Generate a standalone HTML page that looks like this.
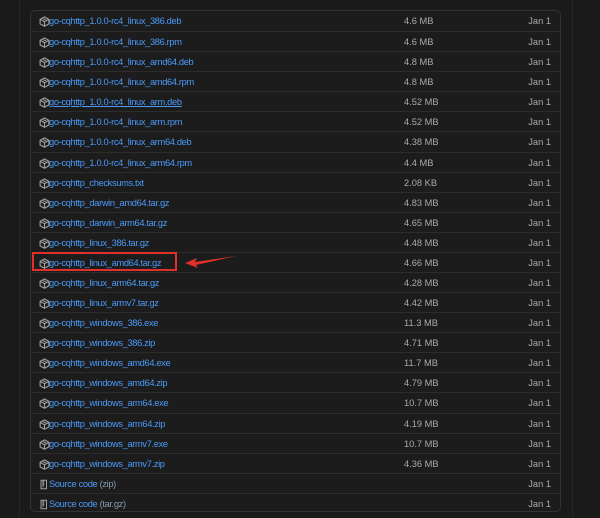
<!DOCTYPE html><html><head><style>
body{margin:0;width:600px;height:518px;background:#1a1a1a;overflow:hidden;font-family:"Liberation Sans",sans-serif;position:relative}
.vl{position:absolute;top:0;bottom:0;width:1px;background:#262626}
.box{position:absolute;left:30px;top:10px;width:531px;height:502px;border:1px solid #333;border-radius:5px;background:#1c1c1c;box-sizing:border-box}
.r{height:20.08px;border-top:1px solid #2c2c2c;box-sizing:border-box;position:relative;font-size:9.3px;line-height:21px}
.r:first-child{border-top:none}
.n{position:absolute;left:18px;color:#4b9af8;letter-spacing:-0.35px}
.n.u{text-decoration:underline}
.n span{color:#8a9bb0}
.ic{position:absolute;left:8px;top:5px}
.s{position:absolute;left:373px;color:#aaa}
.d{position:absolute;right:9px;color:#aaa}
.hl{position:absolute;left:32px;top:252px;width:145px;height:19px;border:2px solid #e0302c;box-sizing:border-box}
</style></head><body>
<div class="vl" style="left:19px"></div><div class="vl" style="left:572px"></div>
<div class="box" id="b"></div>
<div class="hl"></div>
<svg style="position:absolute;left:183px;top:255px" width="55" height="14"><path d="M2 8 L14 3 L12 7 L53 1 L13 10 L15 13 Z" fill="#e0302c"/></svg>
<script>
const rows=[["go-cqhttp_1.0.0-rc4_linux_386.deb","4.6 MB"],["go-cqhttp_1.0.0-rc4_linux_386.rpm","4.6 MB"],["go-cqhttp_1.0.0-rc4_linux_amd64.deb","4.8 MB"],["go-cqhttp_1.0.0-rc4_linux_amd64.rpm","4.8 MB"],["go-cqhttp_1.0.0-rc4_linux_arm.deb","4.52 MB",1],["go-cqhttp_1.0.0-rc4_linux_arm.rpm","4.52 MB"],["go-cqhttp_1.0.0-rc4_linux_arm64.deb","4.38 MB"],["go-cqhttp_1.0.0-rc4_linux_arm64.rpm","4.4 MB"],["go-cqhttp_checksums.txt","2.08 KB"],["go-cqhttp_darwin_amd64.tar.gz","4.83 MB"],["go-cqhttp_darwin_arm64.tar.gz","4.65 MB"],["go-cqhttp_linux_386.tar.gz","4.48 MB"],["go-cqhttp_linux_amd64.tar.gz","4.66 MB"],["go-cqhttp_linux_arm64.tar.gz","4.28 MB"],["go-cqhttp_linux_armv7.tar.gz","4.42 MB"],["go-cqhttp_windows_386.exe","11.3 MB"],["go-cqhttp_windows_386.zip","4.71 MB"],["go-cqhttp_windows_amd64.exe","11.7 MB"],["go-cqhttp_windows_amd64.zip","4.79 MB"],["go-cqhttp_windows_arm64.exe","10.7 MB"],["go-cqhttp_windows_arm64.zip","4.19 MB"],["go-cqhttp_windows_armv7.exe","10.7 MB"],["go-cqhttp_windows_armv7.zip","4.36 MB"]];
const pkg='<svg class="ic" width="11" height="11" viewBox="0 0 10 10"><path d="M5 .8L9 3v4.2L5 9.3 1 7.2V3z M1 3l4 2.2L9 3 M5 5.2v4 M3 1.9l4 2.2" fill="none" stroke="#a0a0a0" stroke-width="1"/></svg>';
const zip='<svg class="ic" width="10" height="11" viewBox="0 0 10 10"><path d="M2 .7h5.5v8.6H2z M4 .7v7 M4 2h1.2M4 3.5h1.2M4 5h1.2" fill="none" stroke="#a0a0a0" stroke-width="1"/></svg>';
let h='';
rows.forEach(r=>{h+=`<div class="r">${pkg}<span class="n${r[2]?' u':''}">${r[0]}</span><span class="s">${r[1]}</span><span class="d">Jan 1</span></div>`});
h+=`<div class="r">${zip}<span class="n">Source code <span>(zip)</span></span><span class="d">Jan 1</span></div>`;
h+=`<div class="r">${zip}<span class="n">Source code <span>(tar.gz)</span></span><span class="d">Jan 1</span></div>`;
document.getElementById('b').innerHTML=h;
</script>
</body></html>
